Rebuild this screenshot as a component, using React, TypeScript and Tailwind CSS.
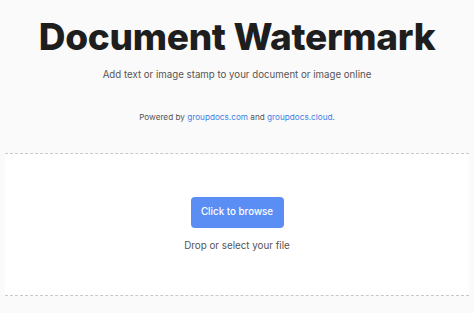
import React from 'react';

export default function App() {
  return (
    <div className="w-[474px] h-[313px] bg-[#fafafa] font-['Inter',sans-serif] overflow-hidden">
      {/* Header */}
      <div className="flex flex-col items-center pt-[13px] h-[153px]">
        <h1 className="text-[37px] leading-[47px] font-extrabold tracking-[-0.3px] text-[#1e1e1e]">Document Watermark</h1>
        <p className="mt-[8px] text-[9.7px] leading-[14px] text-[#555]">Add text or image stamp to your document or image online</p>
        <p className="mt-[29px] text-[8.2px] leading-[12px] text-[#555]">
          Powered by <a className="text-[#3f7ee8]">groupdocs.com</a> and <a className="text-[#3f7ee8]">groupdocs.cloud</a>.
        </p>
      </div>

      {/* Upload area */}
      <div className="mx-[5px] border-y border-dashed border-[#c8c8c8] bg-white h-[143px] flex flex-col items-center pt-[43px]">
        <button
          type="button"
          className="w-[93px] h-[31px] rounded-[4px] bg-[#5a8ef5] text-white text-[9.8px] font-medium"
        >
          Click to browse
        </button>
        <p className="mt-[11px] text-[9.8px] leading-[14px] text-[#555]">Drop or select your file</p>
      </div>
    </div>
  );
}
